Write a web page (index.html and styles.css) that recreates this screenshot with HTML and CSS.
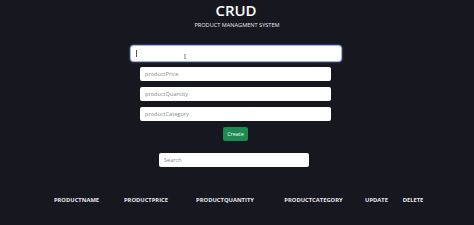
FILE: index.html
```html
<!DOCTYPE html>
<html lang="en">
<head>
    <meta charset="UTF-8">
    <meta name="viewport" content="width=device-width, initial-scale=1.0">
    <title>CRUD</title>
    <link rel="stylesheet" href="styles.css">
</head>
<body>
    <div class="container">
        <header class="head">
            <h1>CRUD</h1>
            <p>PRODUCT MANAGMENT SYSTEM</p>
        </header>

        <div class="form">
            <div class="name-wrap">
                <input type="text" id="productName" class="name-input">
                <span class="caret"></span>
                <span class="ibeam">I</span>
            </div>
            <input type="text" id="productPrice" placeholder="productPrice">
            <input type="text" id="productQuantity" placeholder="productQuantity">
            <input type="text" id="productCategory" placeholder="productCategory">
            <button class="create-btn">Create</button>
        </div>

        <div class="search">
            <input type="text" id="search" placeholder="Search">
        </div>

        <table class="products">
            <colgroup>
                <col style="width: 73px">
                <col style="width: 66px">
                <col style="width: 92px">
                <col style="width: 85px">
                <col style="width: 41px">
                <col style="width: 32px">
            </colgroup>
            <thead>
                <tr>
                    <th>PRODUCTNAME</th>
                    <th>PRODUCTPRICE</th>
                    <th>PRODUCTQUANTITY</th>
                    <th>PRODUCTCATEGORY</th>
                    <th>UPDATE</th>
                    <th>DELETE</th>
                </tr>
            </thead>
            <tbody id="tableBody"></tbody>
        </table>
    </div>
</body>
</html>
```

FILE: styles.css
```css
body {
    font-family: 'Open Sans', Arial, sans-serif;
    margin: 0;
    padding: 0;
    background: #17171f;
    color: #fff;
    height: 225px;
    overflow: hidden;
}

.container {
    width: 474px;
}

.head {
    text-align: center;
    padding-top: 1px;
}

.head h1 {
    margin: 0;
    font-size: 15px;
    font-weight: 600;
    line-height: 18px;
    margin-right: 2px;
}

.head p {
    margin: 3px 0 0;
    font-size: 5.6px;
    line-height: 7px;
    color: #e8e8ee;
}

.form {
    display: flex;
    flex-direction: column;
    align-items: center;
    gap: 6px;
    margin-top: 17px;
    margin-right: 3px;
}

.form input,
.search input {
    box-sizing: border-box;
    width: 191px;
    height: 14px;
    border: none;
    border-radius: 2px;
    background: #fff;
    padding: 0 5px;
    font-family: 'Open Sans', Arial, sans-serif;
    font-size: 5.6px;
    color: #333;
    outline: none;
}

.form input::placeholder,
.search input::placeholder {
    color: #8a8a8a;
}

.name-wrap {
    position: relative;
    height: 15px;
}

.form .name-input {
    display: block;
    width: 210px;
    height: 15px;
    border-radius: 3px;
    box-shadow: 0 0 0 1px #9fb4e6, 0 0 2px 1px #6d86c4;
}

.caret {
    position: absolute;
    left: 5px;
    top: 4px;
    width: 1px;
    height: 7px;
    background: #555;
}

.ibeam {
    position: absolute;
    left: 53px;
    top: 8px;
    font-size: 7px;
    line-height: 7px;
    color: #666;
    font-family: 'DejaVu Serif', serif;
}

.create-btn {
    width: 25px;
    height: 14px;
    padding: 0;
    border: none;
    border-radius: 2px;
    background: #1d8a4f;
    color: #fff;
    font-family: 'Open Sans', Arial, sans-serif;
    font-size: 5.4px;
}

.search {
    display: flex;
    justify-content: center;
    margin-top: 12px;
}

.search input {
    width: 150px;
    margin-right: 6px;
}

.products {
    margin: 29px 0 0 40px;
    table-layout: fixed;
    width: 389px;
    border-collapse: collapse;
}

.products th {
    padding: 0;
    font-size: 5.8px;
    font-weight: 700;
    text-align: center;
    color: #e6e6ee;
    line-height: 8px;
}
```
